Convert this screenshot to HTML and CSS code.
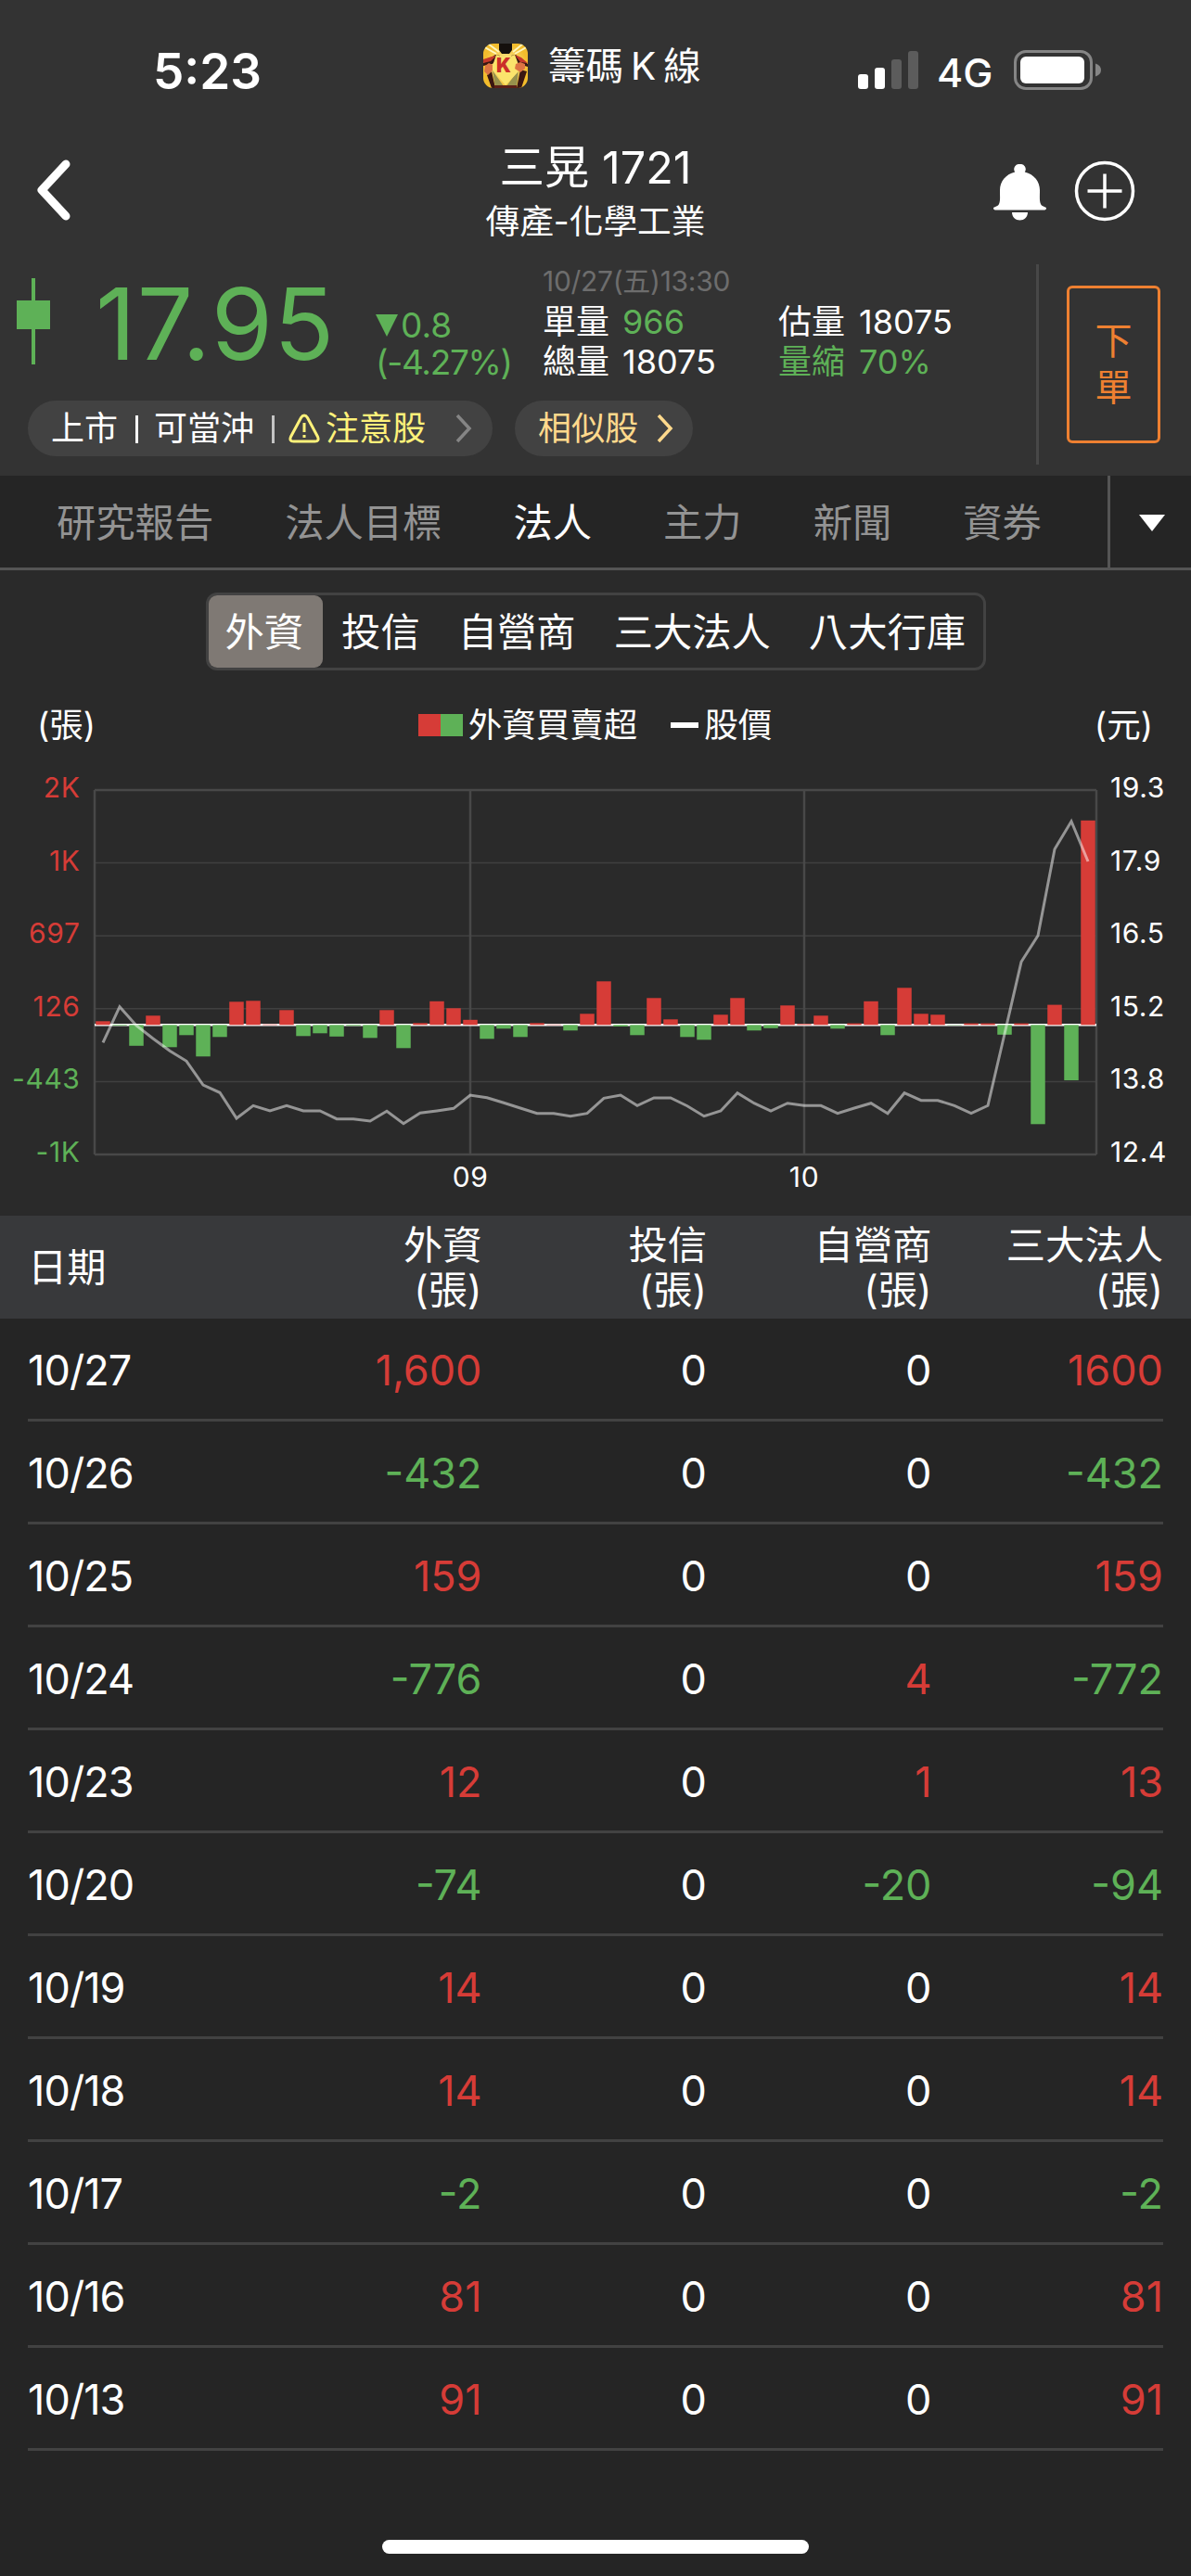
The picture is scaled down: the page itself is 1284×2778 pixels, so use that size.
FILE: index.html
```html
<!DOCTYPE html>
<html lang="zh-Hant">

<head>
  <meta charset="UTF-8">
  <meta name="viewport" content="width=device-width, initial-scale=1.0">
  <title>三晃 1721 - 籌碼K線</title>
  <link rel="stylesheet" href="styles.css">
</head>

<body>
  <header class="header">
    <div class="status">
      <span class="status-time">5:23</span>
      <div class="status-app">
        <svg class="app-icon" viewBox="0 0 48 48">
          <defs>
            <clipPath id="icon-clip"><rect width="48" height="48" rx="11" /></clipPath>
            <radialGradient id="icon-bg"><stop offset="0" stop-color="#fff3a8" /><stop offset="1" stop-color="#f3bd2c" /></radialGradient>
          </defs>
          <g clip-path="url(#icon-clip)">
            <rect width="48" height="48" fill="url(#icon-bg)" />
            <path d="M0 3l14 8M5 0l12 9M48 3L34 11M43 0L32 9" stroke="#fff6bd" stroke-width="2" />
            <path d="M0 21l13-9 5 1-8 9-10 2zM48 22l-13-10-5 1 8 9 10 3z" fill="#3a1712" />
            <path d="M0 17l9-3 5-1-6 6-8 2zM48 21l-7-6-7-3 6 8z" fill="#c5392c" />
            <path d="M9 30l4 18H9L4 34zM40 28l-4 20h5l6-18z" fill="#3a1712" />
            <path d="M10 29l12 17h3l13-18-2 20H13z" fill="#97914d" />
            <path d="M14 12q10 5 20 0l6 16-16 17L9 27z" fill="#fbe46c" />
            <path d="M17 0h14v7l-3 4h-8l-3-4z" fill="#15100d" />
            <path d="M2 24l4-3 4 2v6l-5 5-4-4zM45 22l-5-2-5 2-1 5 6 4 5-4z" fill="#dd7443" />
            <path d="M12 45h24v3H12z" fill="#5c1f18" />
          </g>
          <text class="app-icon-letter" x="22" y="31">K</text>
        </svg>
        <span class="app-name">籌碼<span class="app-name-k">K</span>線</span>
      </div>
      <div class="status-right">
        <svg class="signal" viewBox="0 0 66 42">
          <rect x="0" y="26" width="11" height="16" rx="3" />
          <rect x="18" y="19" width="11" height="23" rx="3" />
          <rect class="signal-off" x="36" y="10" width="11" height="32" rx="3" />
          <rect class="signal-off" x="54" y="1" width="11" height="41" rx="3" />
        </svg>
        <span class="network">4G</span>
        <svg class="battery" viewBox="0 0 94 44">
          <rect x="1.5" y="1.5" width="82" height="40" rx="11.5" fill="none" stroke="#858585" stroke-width="3" />
          <rect x="7" y="7" width="69" height="29" rx="6" fill="#fff" />
          <path d="M88 14.500q6 2 6 7t-6 7z" fill="#858585" />
        </svg>
      </div>
    </div>

    <div class="nav">
      <svg class="back" viewBox="0 0 40 68"><path d="M33 6L7 34l26 28" /></svg>
      <div class="nav-title">
        <h1>三晃 1721</h1>
        <p>傳產-化學工業</p>
      </div>
      <div class="nav-actions">
        <svg class="bell" viewBox="0 0 57 61">
          <path d="M28.500 0a5.500 5.500 0 0 1 5.300 8.500C44 11 50 19 50 28c0 8-.5 12 1 15 1 3 6 3 6 4.500q0 2-3 2H3q-3 0-3-2C0 46 5 46 6 43c1.500-3 1-7 1-15 0-9 6-17 16.200-19.500A5.500 5.500 0 0 1 28.500 0zM20 52h17c0 5-4 8.500-8.500 8.500S20 57 20 52z" />
        </svg>
        <svg class="plus" viewBox="0 0 66 66">
          <circle cx="33" cy="33" r="30.500" />
          <path d="M14.500 33h37M33 14.500v37" />
        </svg>
      </div>
    </div>

    <div class="quote">
      <div class="quote-main">
        <div class="quote-row">
          <svg class="candle" viewBox="0 0 36 93">
            <path d="M16 0h4v24h16v31H20v38h-4V55H0V24h16z" />
          </svg>
          <span class="price">17.95</span>
          <div class="change">
            <p><svg class="down" viewBox="0 0 24 24"><path d="M0 0h24L12 24z" /></svg>0.8</p>
            <p class="percent">(-4.27%)</p>
          </div>
          <div class="volume">
            <p class="volume-time">10/27(五)13:30</p>
            <dl>
              <dt>單量</dt><dd class="down-text">966</dd>
              <dt>估量</dt><dd>18075</dd>
              <dt>總量</dt><dd>18075</dd>
              <dt class="down-text">量縮</dt><dd class="down-text">70%</dd>
            </dl>
          </div>
        </div>
        <div class="tags">
          <div class="tag tag-info">
            <span>上市</span>
            <i class="bar"></i>
            <span>可當沖</span>
            <i class="bar bar-dim"></i>
            <span class="tag-warn">
              <svg class="warn" viewBox="0 0 34 32"><path d="M17 2q2 0 3.500 2.500L31.500 25q2 5-3 5h-23q-5 0-3-5L13.500 4.500Q15 2 17 2zM17 10v10M17 23v3" /></svg>注意股
            </span>
            <svg class="chevron" viewBox="0 0 18 32"><path d="M2 2l13 14L2 30" /></svg>
          </div>
          <div class="tag tag-similar">
            <span>相似股</span>
            <svg class="chevron" viewBox="0 0 18 32"><path d="M2 2l13 14L2 30" /></svg>
          </div>
        </div>
      </div>
      <div class="order"><button class="order-btn">下<br>單</button></div>
    </div>
  </header>

  <nav class="tabs">
    <ul class="tabs-list">
      <li>研究報告</li>
      <li>法人目標</li>
      <li class="tabs-active">法人</li>
      <li>主力</li>
      <li>新聞</li>
      <li>資券</li>
    </ul>
    <div class="tabs-more"><svg class="tabs-arrow" viewBox="0 0 28 18"><path d="M0 0h28L14 18z" /></svg></div>
  </nav>

  <section class="chart-panel">
    <ul class="segment">
      <li class="segment-active">外資</li>
      <li>投信</li>
      <li>自營商</li>
      <li>三大法人</li>
      <li>八大行庫</li>
    </ul>
    <div class="legend">
      <span>(張)</span>
      <div class="legend-items">
        <i class="legend-box"></i><span class="legend-name">外資買賣超</span>
        <i class="legend-line"></i><span>股價</span>
      </div>
      <span>(元)</span>
    </div>
    <svg class="chart" viewBox="0 820 1284 491"></svg>
  </section>

  <table class="table">
    <thead>
      <tr><th>日期</th><th>外資<br>(張)</th><th>投信<br>(張)</th><th>自營商<br>(張)</th><th>三大法人<br>(張)</th></tr>
    </thead>
    <tbody>
      <tr><td>10/27</td><td class="up">1,600</td><td>0</td><td>0</td><td class="up">1600</td></tr>
      <tr><td>10/26</td><td class="dn">-432</td><td>0</td><td>0</td><td class="dn">-432</td></tr>
      <tr><td>10/25</td><td class="up">159</td><td>0</td><td>0</td><td class="up">159</td></tr>
      <tr><td>10/24</td><td class="dn">-776</td><td>0</td><td class="up">4</td><td class="dn">-772</td></tr>
      <tr><td>10/23</td><td class="up">12</td><td>0</td><td class="up">1</td><td class="up">13</td></tr>
      <tr><td>10/20</td><td class="dn">-74</td><td>0</td><td class="dn">-20</td><td class="dn">-94</td></tr>
      <tr><td>10/19</td><td class="up">14</td><td>0</td><td>0</td><td class="up">14</td></tr>
      <tr><td>10/18</td><td class="up">14</td><td>0</td><td>0</td><td class="up">14</td></tr>
      <tr><td>10/17</td><td class="dn">-2</td><td>0</td><td>0</td><td class="dn">-2</td></tr>
      <tr><td>10/16</td><td class="up">81</td><td>0</td><td>0</td><td class="up">81</td></tr>
      <tr><td>10/13</td><td class="up">91</td><td>0</td><td>0</td><td class="up">91</td></tr>
    </tbody>
  </table>
  <div class="home-bar"></div>
  <script src="chart.js"></script>
</body>

</html>
```
FILE: styles.css
```css
* {
  margin: 0;
  padding: 0;
  box-sizing: border-box;
}

body {
  width: 1284px;
  height: 2778px;
  display: flex;
  flex-direction: column;
  overflow: hidden;
  background: #252525;
  color: #fff;
  font-family: Inter, "Noto Sans CJK TC", sans-serif;
  font-weight: 400;
}

ul {
  list-style-type: none;
}

svg {
  display: block;
  flex: none;
}

.header {
  height: 513px;
  background: #333;
}

/* status bar */
.status {
  height: 150px;
  display: flex;
  padding-left: 165px;
}

.status-time {
  width: 356px;
  padding-top: 45px;
  font-size: 53px;
  line-height: 64px;
  font-weight: 600;
}

.status-app {
  width: 404px;
  display: flex;
  padding-top: 47px;
}

.app-icon {
  width: 48px;
  height: 48px;
  margin-right: 22px;
}

.app-icon-letter {
  fill: #cb3029;
  font: 900 21px Inter, sans-serif;
  text-anchor: middle;
}

.app-name {
  font-size: 40.5px;
  line-height: 49px;
  white-space: nowrap;
}

.app-name-k {
  margin: 0 8px;
}

.status-right {
  display: flex;
  padding-top: 54px;
}

.signal {
  width: 66px;
  height: 42px;
  fill: #fff;
}

.signal-off {
  fill: #5c5c5c;
}

.network {
  width: 83px;
  margin-left: 19px;
  font-size: 43px;
  line-height: 48px;
  font-weight: 500;
}

.battery {
  width: 94px;
  height: 44px;
}

/* title */
.nav {
  height: 135px;
  display: flex;
}

.back {
  width: 40px;
  height: 68px;
  margin: 21px 0 0 38px;
  fill: none;
  stroke: #fff;
  stroke-width: 9;
  stroke-linecap: round;
  stroke-linejoin: round;
}

.nav-title {
  width: 1128px;
  margin: 0 -135px 0 0;
  text-align: center;
}

.nav-title h1 {
  font-size: 48.5px;
  line-height: 61px;
  font-weight: 400;
}

.nav-title p {
  font-size: 36.7px;
  line-height: 56px;
}

.nav-actions {
  display: flex;
  padding-top: 23px;
}

.bell {
  width: 57px;
  height: 61px;
  margin: 4px 30px 0 0;
  fill: #fff;
}

.plus {
  width: 66px;
  height: 66px;
  fill: none;
  stroke: #fff;
  stroke-width: 3.5;
}

/* quote */
.quote {
  display: flex;
  height: 228px;
}

.quote-main {
  width: 1117px;
}

.quote-row {
  display: flex;
  height: 147px;
}

.candle {
  width: 36px;
  height: 93px;
  margin: 15px 0 0 18px;
  fill: #5eb157;
}

.price {
  width: 306px;
  padding: 0 0 0 49px;
  color: #5eb157;
  font-size: 107px;
  line-height: 129px;
  letter-spacing: 1.3px;
}

.change {
  width: 181px;
  padding: 46px 0 0 45px;
  color: #5eb157;
  font-size: 37px;
  line-height: 40px;
}

.change p {
  display: flex;
  align-items: center;
}

.change .percent {
  letter-spacing: -1.3px;
}

.down {
  width: 24px;
  height: 24px;
  margin-right: 3px;
  fill: #5eb157;
}

.volume {
  margin-left: 44px;
}

.volume-time {
  color: #6d6d6d;
  font-size: 30px;
  line-height: 36px;
  letter-spacing: -0.3px;
}

.volume dl {
  display: grid;
  grid-template-columns: 86px 168px 87px 130px;
  font-size: 36px;
  line-height: 43px;
  padding-top: 5px;
}

.down-text {
  color: #5eb157;
}

.tags {
  display: flex;
  gap: 24px;
  padding-left: 30px;
}

.tag {
  display: flex;
  align-items: center;
  height: 60px;
  border-radius: 30px;
  background: #424242;
  font-size: 36px;
  line-height: 60px;
}

.tag-info {
  width: 501px;
  padding-left: 25px;
}

.bar {
  width: 3px;
  height: 30px;
  margin: 2px 17px 0 19px;
  background: #fff;
}

.bar-dim {
  margin-right: 15px;
  background: #c4c4c4;
}

.tag-warn {
  display: flex;
  align-items: center;
  color: #fff27a;
}

.warn {
  width: 34px;
  height: 32px;
  margin-right: 6px;
  fill: none;
  stroke: #fff27a;
  stroke-width: 3;
}

.chevron {
  width: 18px;
  height: 32px;
  margin-left: 32px;
  fill: none;
  stroke: #858585;
  stroke-width: 3.5;
}

.tag-similar {
  width: 192px;
  padding-left: 25px;
  color: #ffd98c;
}

.tag-similar .chevron {
  margin-left: 20px;
  stroke: #ffd98c;
}

.order {
  width: 134px;
  height: 216px;
  border-left: 3px solid #484848;
  padding: 23px 0 0 30px;
}

.order-btn {
  width: 101px;
  height: 170px;
  border: 3px solid #ee8031;
  border-radius: 6px;
  background: none;
  color: #ee8031;
  font-family: inherit;
  font-size: 40px;
  line-height: 50px;
}

/* tabs */
.tabs {
  height: 102px;
  display: flex;
  border-bottom: 3px solid #555;
}

.tabs-list {
  width: 1194px;
  display: flex;
  gap: 77px;
  padding-left: 61px;
  color: #939393;
  font-size: 42.3px;
  line-height: 102px;
}

.tabs-active {
  color: #fff;
}

.tabs-more {
  width: 90px;
  border-left: 3px solid #555;
}

.tabs-arrow {
  width: 28px;
  height: 18px;
  margin: 42px 0 0 31px;
  fill: #fff;
}

/* chart */
.chart-panel {
  height: 696px;
  padding-top: 24px;
  background: #2a2a2a;
}

.segment {
  width: 841px;
  height: 84px;
  display: flex;
  margin: 0 auto;
  border: 3px solid #424242;
  border-radius: 12px;
  font-size: 42.3px;
  line-height: 79px;
  white-space: nowrap;
}

.segment li {
  flex: none;
  padding: 0 20.5px;
}

.segment .segment-active {
  padding: 0 20.5px 0 18px;
  border-radius: 9px;
  background: #7f7974;
}

.legend {
  height: 97px;
  display: flex;
  justify-content: space-between;
  padding: 33px 41px 0 40px;
  font-size: 36.5px;
  line-height: 52px;
}

.legend-items {
  display: flex;
  align-items: center;
  height: 52px;
}

.legend-box {
  width: 48px;
  height: 24px;
  margin-right: 6px;
  background: linear-gradient(90deg, #d63c37 50%, #5eb157 50%);
}

.legend-name {
  margin-right: 36px;
}

.legend-line {
  width: 30px;
  height: 6px;
  margin-right: 6px;
  background: #fff;
}

.chart {
  width: 1284px;
  height: 491px;
}

.chart text {
  font-size: 30px;
  letter-spacing: 0.6px;
}

.chart-grid {
  stroke: #404040;
  stroke-width: 1.5;
}

.chart-frame {
  stroke: #484848;
  stroke-width: 2.5;
}

.chart-zero {
  stroke: #fff;
  stroke-width: 2.5;
}

.chart-price {
  fill: none;
  stroke: #fff;
  stroke-opacity: 0.5;
  stroke-width: 3;
}

.chart-up {
  fill: #d63c37;
}

.chart-down {
  fill: #5eb157;
}

.chart-label {
  fill: #fff;
}

/* table */
.table {
  width: 1284px;
  table-layout: fixed;
  border-collapse: separate;
  border-spacing: 0;
  border-left: 30px solid transparent;
  border-right: 30px solid transparent;
  background: linear-gradient(#38393b 111px, #252525 111px) border-box;
}

.table th {
  height: 111px;
  font-size: 42.3px;
  line-height: 48px;
  font-weight: 400;
  text-align: right;
}

.table th:first-child,
.table td:first-child {
  width: 247px;
  text-align: left;
}

.table td:first-child {
  letter-spacing: -0.9px;
}

.table th:nth-child(2),
.table th:nth-child(3),
.table th:nth-child(4) {
  width: 242.5px;
}

.table td {
  height: 111px;
  padding-top: 4px;
  border-bottom: 3px solid #424242;
  font-size: 45px;
  line-height: 54px;
  text-align: right;
}

.table .up {
  color: #d63c37;
}

.table .dn {
  color: #5eb157;
}

.home-bar {
  width: 460px;
  height: 15px;
  margin: auto auto 24px;
  border-radius: 8px;
  background: #fff;
}
```
FILE: chart.js
```js
var svg = document.querySelector(".chart");
var LEFT = 102, RIGHT = 1182, TOP = 852, STEP = 78.6, ZERO = 1105.3;

// net buy (+) / sell (-), as bar heights
var bars = [4, -0.8, -22.5, 10, -24, -11, -34, -13, 25, 26, 0.6, 16, -12, -9, -12.5, -1, -14, 16, -25, 2,
  25.5, 18, 5.5, -15, -4, -13, 2, 0.5, -6, 12, 47, -1.7, -11, 29, 6, -13, -16, 11, 29, -6,
  -3.5, 21, 1, 10, -4, 1.7, 25.5, -11, 40, 12, 11, -0.4, 1.7, 1.7, -10.5, 1.7, -107, 21.7, -59.7, 220.5];

// closing price, in thirds of a pixel from y = 810
var price = [943, 827, 888, 930, 970, 1003, 1080, 1105, 1188, 1147, 1164, 1147, 1164, 1164, 1190, 1190, 1197, 1165, 1205, 1171,
  1164, 1156, 1113, 1121, 1138, 1155, 1172, 1172, 1181, 1172, 1123, 1113, 1147, 1122, 1122, 1148, 1181, 1164, 1106, 1139,
  1164, 1139, 1147, 1147, 1172, 1155, 1139, 1172, 1106, 1130, 1130, 1147, 1172, 1147, 915, 682, 597, 317, 227, 357];

function add(tag, cls, attrs, text) {
  var el = document.createElementNS("http://www.w3.org/2000/svg", tag);
  el.setAttribute("class", cls);
  for (var key in attrs) {
    el.setAttribute(key, attrs[key]);
  }
  if (text) {
    el.textContent = text;
  }
  svg.appendChild(el);
}

function line(cls, x1, y1, x2, y2) {
  add("line", cls, { x1: x1, y1: y1, x2: x2, y2: y2 });
}

function centerX(i) {
  return LEFT + 9 + i * 18;
}

["2K", "1K", "697", "126", "-443", "-1K"].forEach(function (label, i) {
  var y = TOP + STEP * i;
  line(i % 5 ? "chart-grid" : "chart-frame", LEFT, y, RIGHT, y);
  add("text", i < 4 ? "chart-up" : "chart-down", { x: 86.5, y: y + 8, "text-anchor": "end" }, label);
});
["19.3", "17.9", "16.5", "15.2", "13.8", "12.4"].forEach(function (label, i) {
  add("text", "chart-label", { x: 1197, y: TOP + STEP * i + 8 }, label);
});
[LEFT, centerX(22), centerX(42), RIGHT].forEach(function (x) {
  line("chart-frame", x, TOP, x, TOP + STEP * 5);
});
add("text", "chart-label", { x: centerX(22), y: 1280, "text-anchor": "middle" }, "09");
add("text", "chart-label", { x: centerX(42), y: 1280, "text-anchor": "middle" }, "10");

line("chart-zero", LEFT, ZERO, RIGHT, ZERO);
bars.forEach(function (h, i) {
  add("rect", h > 0 ? "chart-up" : "chart-down", {
    x: centerX(i) - 7.75,
    y: h > 0 ? ZERO - h : ZERO,
    width: 15.5,
    height: Math.abs(h)
  });
});
add("polyline", "chart-price", {
  points: price.map(function (p, i) {
    return centerX(i) + "," + (810 + p / 3).toFixed(1);
  }).join(" ")
});
```
